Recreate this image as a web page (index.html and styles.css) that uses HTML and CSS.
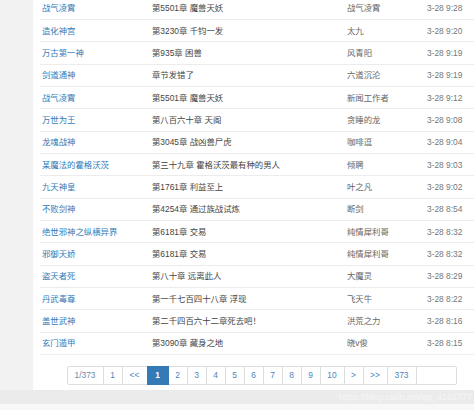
FILE: index.html
```html
<!DOCTYPE html>
<html lang="zh">
<head>
<meta charset="utf-8">
<title>更新列表</title>
<link rel="stylesheet" href="styles.css">
</head>
<body>
<div class="page">
  <div class="card">
    <div class="list">
      <div class="row"><a class="name">战气凌霄</a><span class="chap">第5501章 魔兽天妖</span><span class="author">战气凌霄</span><span class="time">3-28 9:28</span></div>
      <div class="row"><a class="name">造化神宫</a><span class="chap">第3230章 千钧一发</span><span class="author">太九</span><span class="time">3-28 9:20</span></div>
      <div class="row"><a class="name">万古第一神</a><span class="chap">第935章 困兽</span><span class="author">风青阳</span><span class="time">3-28 9:19</span></div>
      <div class="row"><a class="name">剑道通神</a><span class="chap">章节发错了</span><span class="author">六道沉沦</span><span class="time">3-28 9:19</span></div>
      <div class="row"><a class="name">战气凌霄</a><span class="chap">第5501章 魔兽天妖</span><span class="author">新闻工作者</span><span class="time">3-28 9:12</span></div>
      <div class="row"><a class="name">万世为王</a><span class="chap">第八百六十章 天阁</span><span class="author">贪睡的龙</span><span class="time">3-28 9:08</span></div>
      <div class="row"><a class="name">龙魂战神</a><span class="chap">第3045章 战凶兽尸虎</span><span class="author">咖啡逗</span><span class="time">3-28 9:04</span></div>
      <div class="row"><a class="name">某魔法的霍格沃茨</a><span class="chap">第三十九章 霍格沃茨最有种的男人</span><span class="author">倾聘</span><span class="time">3-28 9:03</span></div>
      <div class="row"><a class="name">九天神皇</a><span class="chap">第1761章 利益至上</span><span class="author">叶之凡</span><span class="time">3-28 9:02</span></div>
      <div class="row"><a class="name">不败剑神</a><span class="chap">第4254章 通过族战试炼</span><span class="author">断剑</span><span class="time">3-28 8:54</span></div>
      <div class="row"><a class="name">绝世邪神之纵横异界</a><span class="chap">第6181章 交易</span><span class="author">纯情犀利哥</span><span class="time">3-28 8:32</span></div>
      <div class="row"><a class="name">邪御天娇</a><span class="chap">第6181章 交易</span><span class="author">纯情犀利哥</span><span class="time">3-28 8:32</span></div>
      <div class="row"><a class="name">盗天者死</a><span class="chap">第八十章 远离此人</span><span class="author">大魔灵</span><span class="time">3-28 8:29</span></div>
      <div class="row"><a class="name">丹武毒尊</a><span class="chap">第一千七百四十八章 浮现</span><span class="author">飞天牛</span><span class="time">3-28 8:22</span></div>
      <div class="row"><a class="name">盖世武神</a><span class="chap">第二千四百六十二章死去吧！</span><span class="author">洪荒之力</span><span class="time">3-28 8:16</span></div>
      <div class="row"><a class="name">玄门遁甲</a><span class="chap">第3090章 藏身之地</span><span class="author">晓v俊</span><span class="time">3-28 8:15</span></div>
    </div>
    <ul class="pager">
      <li class="pg first w37">1/373</li>
      <li class="pg w19">1</li>
      <li class="pg w25">&lt;&lt;</li>
      <li class="pg active w21">1</li>
      <li class="pg w19">2</li>
      <li class="pg w19">3</li>
      <li class="pg w19">4</li>
      <li class="pg w19">5</li>
      <li class="pg w19">6</li>
      <li class="pg w19">7</li>
      <li class="pg w19">8</li>
      <li class="pg w19">9</li>
      <li class="pg w24">10</li>
      <li class="pg w19">&gt;</li>
      <li class="pg w24">&gt;&gt;</li>
      <li class="pg w29">373</li>
      <li class="pg last w40"></li>
    </ul>
  </div>
  <div class="band"><span class="mark">https://blog.csdn.net/qq_4161777</span></div>
  <div class="foot"></div>
</div>
</body>
</html>
```

FILE: styles.css
```css
html, body {
  margin: 0;
  padding: 0;
  overflow: hidden;
}
body {
  width: 474px;
  height: 410px;
  background: #f2f2f2;
  font-family: "Liberation Sans", "Noto Sans CJK SC", sans-serif;
  font-size: 8.4px;
  color: #333;
}
.page {
  display: flex;
  flex-direction: column;
  padding-left: 33px;
  height: 410px;
}
.card {
  width: 457px;
  flex: none;
  box-sizing: border-box;
  margin-top: -3.33px;
  padding: 0 7px 5px 7px;
  background: #fff;
}
.list {
  border-bottom: 1px solid #f0f0f0;
}
.row {
  display: grid;
  grid-template-columns: 110px 195px 80px 1fr;
  align-items: center;
  height: 22.33px;
  box-sizing: border-box;
  border-top: 1px solid #ececec;
  line-height: 12px;
  white-space: nowrap;
}
.row > * {
  padding-left: 2px;
}
.name {
  color: #337ab7;
  text-decoration: none;
}
.chap {
  color: #444;
}
.author {
  color: #666;
}
.time {
  color: #777;
}
.pager {
  list-style: none;
  margin: 11px 0 0 0;
  padding: 0;
  display: flex;
  justify-content: center;
}
.pg {
  height: 19px;
  box-sizing: border-box;
  border: 1px solid #dddddd;
  margin-left: -1px;
  display: flex;
  align-items: center;
  justify-content: center;
  color: #4a86c0;
  background: #fff;
}
.pg.first {
  margin-left: 0;
  color: #6f8aa6;
  border-radius: 2px 0 0 2px;
}
.pg.last {
  border-radius: 0 2px 2px 0;
}
.pg.active {
  background: #337ab7;
  border-color: #337ab7;
  color: #fff;
  font-weight: bold;
  position: relative;
  z-index: 1;
}
.w19 { width: 20px; }
.w21 { width: 22px; }
.w24 { width: 25px; }
.w25 { width: 26px; }
.w29 { width: 30px; }
.w37 { width: 37px; }
.w40 { width: 41px; }
.band {
  margin-left: -33px;
  height: 14px;
  background: #ebebeb;
  display: flex;
  justify-content: flex-end;
  align-items: center;
  overflow: hidden;
}
.mark {
  color: #f6f6f6;
  font-size: 9px;
  white-space: nowrap;
  margin-right: 2px;
}
.foot {
  margin-left: -33px;
  flex: 1;
  background: #f8f8f8;
}
```
